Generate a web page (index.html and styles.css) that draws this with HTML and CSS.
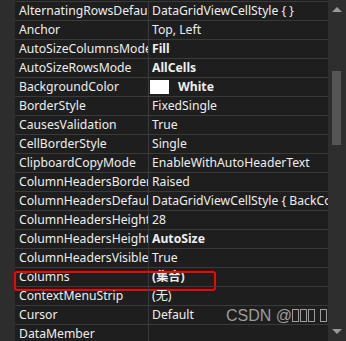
FILE: index.html
```html
<!DOCTYPE html>
<html lang="zh">
<head>
    <meta charset="UTF-8">
    <title>Properties</title>
    <link rel="stylesheet" href="styles.css">
</head>
<body>
    <div class="panel">
        <div class="gutter"></div>
        <div class="grid">
            <div class="row"><div class="name">AlternatingRowsDefaultCellStyle</div><div class="value">DataGridViewCellStyle { }</div></div>
            <div class="row"><div class="name">Anchor</div><div class="value">Top, Left</div></div>
            <div class="row"><div class="name">AutoSizeColumnsMode</div><div class="value bold">Fill</div></div>
            <div class="row"><div class="name">AutoSizeRowsMode</div><div class="value bold">AllCells</div></div>
            <div class="row"><div class="name">BackgroundColor</div><div class="value bold"><span class="swatch"></span>White</div></div>
            <div class="row"><div class="name">BorderStyle</div><div class="value">FixedSingle</div></div>
            <div class="row"><div class="name">CausesValidation</div><div class="value">True</div></div>
            <div class="row"><div class="name">CellBorderStyle</div><div class="value">Single</div></div>
            <div class="row"><div class="name">ClipboardCopyMode</div><div class="value">EnableWithAutoHeaderText</div></div>
            <div class="row"><div class="name">ColumnHeadersBorderStyle</div><div class="value">Raised</div></div>
            <div class="row"><div class="name">ColumnHeadersDefaultCellStyle</div><div class="value">DataGridViewCellStyle { BackColor=Control }</div></div>
            <div class="row"><div class="name">ColumnHeadersHeight</div><div class="value">28</div></div>
            <div class="row"><div class="name">ColumnHeadersHeightSizeMode</div><div class="value bold">AutoSize</div></div>
            <div class="row"><div class="name">ColumnHeadersVisible</div><div class="value">True</div></div>
            <div class="row marked"><div class="name">Columns</div><div class="value bold">(集合)</div><div class="highlight"></div></div>
            <div class="row"><div class="name">ContextMenuStrip</div><div class="value">(无)</div></div>
            <div class="row"><div class="name">Cursor</div><div class="value">Default</div></div>
            <div class="row"><div class="name">DataMember</div><div class="value"></div></div>
        </div>
        <div class="scrollbar">
            <div class="arrow up"></div>
            <div class="thumb"></div>
            <div class="arrow down"></div>
        </div>
        <div class="watermark">CSDN @<span class="tofu"></span><span class="tofu"></span><span class="tofu"></span> <span class="tofu"></span></div>
    </div>
</body>
</html>
```

FILE: styles.css
```css
* {
    margin: 0;
    padding: 0;
    box-sizing: border-box;
}
body {
    width: 346px;
    height: 341px;
    overflow: hidden;
    background: #2d2d2d;
    font-family: 'Noto Sans', 'Noto Sans CJK SC', sans-serif;
    font-size: 12.2px;
    color: #eeeeee;
}
.panel {
    position: relative;
    display: flex;
    height: 341px;
}
.gutter {
    width: 15px;
    background: #2d2d2d;
}
.grid {
    width: 313px;
    padding-top: 1px;
    background: #1e1e1e;
}
.row {
    position: relative;
    display: flex;
    height: 19px;
    border-top: 1px solid #3a3a3a;
}
.name, .value {
    white-space: nowrap;
    overflow: hidden;
    line-height: 18px;
}
.name {
    width: 134px;
    padding-left: 4px;
    border-right: 1px solid #3a3a3a;
}
.value {
    flex: 1;
    padding-left: 3px;
    display: flex;
    align-items: center;
}
.bold {
    font-weight: bold;
}
.swatch {
    width: 19px;
    height: 14px;
    margin: 0 9px 0 -2px;
    background: #fff;
}
.highlight {
    position: absolute;
    left: -1px;
    top: 3px;
    width: 202px;
    height: 20px;
    border: 2.5px solid #f00;
    border-radius: 3px;
}
.scrollbar {
    position: relative;
    flex: 1;
    background: #2e2e2e;
}
.arrow {
    position: absolute;
    left: 4px;
    width: 0;
    height: 0;
    border-left: 5px solid transparent;
    border-right: 5px solid transparent;
}
.arrow.up {
    top: 7px;
    border-bottom: 5px solid #999;
}
.arrow.down {
    top: 329px;
    border-top: 5px solid #999;
}
.thumb {
    position: absolute;
    left: 4px;
    top: 71px;
    width: 9px;
    height: 74px;
    background: #555;
}
.watermark {
    position: absolute;
    left: 226px;
    top: 307px;
    font-family: 'Liberation Sans', sans-serif;
    font-size: 16px;
    color: rgba(200, 200, 200, 0.75);
    white-space: nowrap;
}
.tofu {
    display: inline-block;
    width: 7px;
    height: 13px;
    margin-right: 1px;
    border: 1px solid rgba(200, 200, 200, 0.75);
    vertical-align: -1px;
}
```
